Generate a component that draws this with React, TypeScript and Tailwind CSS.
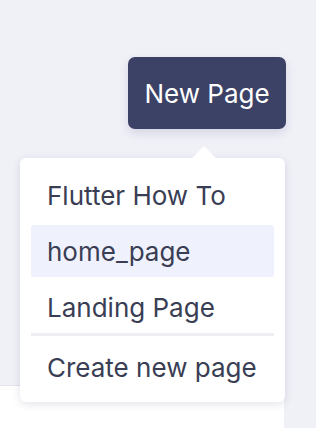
import React from "react";

export default function App() {
  const font = { fontFamily: "Inter, 'Open Sans', sans-serif" };
  return (
    <div className="relative w-[316px] h-[428px] overflow-hidden bg-[#f0f0f7]" style={font}>
      <div className="flex justify-end pt-[57px] pr-[30px]">
        <button className="h-[72px] w-[158px] rounded-[7px] bg-[#3c4166] text-white text-[26px] shadow-[0_4px_10px_rgba(60,65,120,0.15)]">
          New Page
        </button>
      </div>
      <div className="mt-[256px] w-[284px] h-[50px] bg-white border-t border-[#e4e4ec]" />
      <div className="absolute left-[20px] top-[158px] w-[265px] rounded-[6px] bg-white px-[11px] pt-[11px] pb-[9px] shadow-[0_2px_8px_rgba(60,60,110,0.14)] text-[#3a3e54] text-[26px]">
        <div className="absolute left-[172px] top-[-12px] w-0 h-0 border-l-[12px] border-r-[12px] border-b-[12px] border-l-transparent border-r-transparent border-b-white" />
        <div className="h-[52px] flex items-center pl-[16px] pt-[1px] rounded-[3px]">Flutter How To</div>
        <div className="h-[52px] mt-[4px] flex items-center pl-[16px] pt-[1px] rounded-[3px] bg-[#eff1fd]">home_page</div>
        <div className="h-[52px] mt-[4px] flex items-center pl-[16px] pt-[1px] rounded-[3px]">Landing Page</div>
        <div className="h-[3px] bg-[#eeeef5]" />
        <div className="h-[52px] mt-[5px] flex items-center pl-[16px] pt-[1px] rounded-[3px]">Create new page</div>
      </div>
    </div>
  );
}
